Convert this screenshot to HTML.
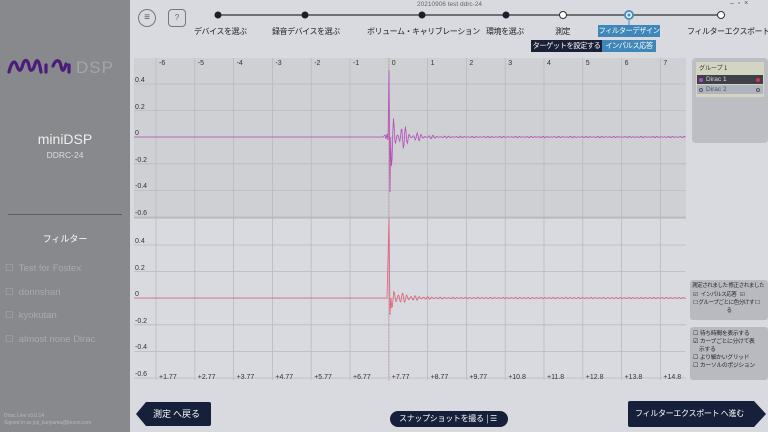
<!DOCTYPE html>
<html><head><meta charset="utf-8"><style>
*{margin:0;padding:0;box-sizing:border-box}
body{width:768px;height:432px;overflow:hidden;background:#d9dadf;font-family:"Liberation Sans","Noto Sans CJK JP",sans-serif;position:relative}
.a{position:absolute;white-space:nowrap}
#side{left:0;top:0;width:130px;height:432px;background:#88898c;color:#e8e8ea}
.lab{font-size:7px;color:#333;position:absolute}
.jp{font-family:"Noto Sans CJK JP",sans-serif}
</style></head><body>
<div id="side" class="a">
<svg class="a" style="left:6px;top:52px" width="120" height="26">
<path d="M3 20 C6 8 9 8 11 14 C13 20 15 20 17 12 C19 6 22 8 23 14 C24 20 27 20 29 12 C31 6 33 8 35 20" stroke="#4b1c7a" stroke-width="3.2" fill="none" stroke-linecap="round"/>
<path d="M40 13 L40 20 M47 14 C50 6 54 8 55 14 C56 20 58 20 60 12 M63 13 L63 20" stroke="#4b1c7a" stroke-width="3.2" fill="none" stroke-linecap="round"/>
<text x="70" y="21" font-size="17" fill="#a5a5a8" font-family="Liberation Sans" letter-spacing="1">DSP</text>
</svg>
<div class="a" style="left:0;width:130px;top:131px;text-align:center;font-size:14px;color:#eee">miniDSP</div>
<div class="a" style="left:0;width:130px;top:150px;text-align:center;font-size:8.5px;color:#ddd">DDRC-24</div>
<div class="a" style="left:8px;top:214px;width:114px;height:1px;background:#5f6064"></div>
<div class="a jp" style="left:0;width:130px;top:232px;text-align:center;font-size:9px;color:#fff">フィルター</div>
<div class="a" style="left:5px;top:257px;font-size:9.5px;color:#a9aaad;line-height:23.5px">
<div>☐ &nbsp;Test for Fostex</div><div>☐ &nbsp;donnshari</div><div>☐ &nbsp;kyokutan</div><div>☐ &nbsp;almost none Dirac</div></div>
<div class="a" style="left:4px;top:413px;font-size:5px;color:#b8b8bb;line-height:7px">Dirac Live v3.0.14<br>Signed in as joji_kuriyama@jtesori.com</div>
</div>
<div class="a" style="left:417px;top:1px;font-size:6.5px;color:#666">20210906 test ddrc-24</div>
<div class="a" style="left:730px;top:0;font-size:7px;color:#555">–&nbsp;&nbsp;▫&nbsp;&nbsp;×</div>
<div class="a" style="left:138px;top:9px;width:18px;height:18px;border:1px solid #777;border-radius:50%;font-size:10px;text-align:center;line-height:15px;color:#555">≡</div>
<div class="a" style="left:168px;top:9px;width:18px;height:18px;border:1px solid #777;border-radius:4px;font-size:8px;text-align:center;line-height:16px;color:#666">?</div>
<svg class="a" style="left:0;top:0" width="768" height="30">
<line x1="218" y1="15" x2="721" y2="15" stroke="#333" stroke-width="1.2"/>
<circle cx="218" cy="15" r="3.5" fill="#1c1f2a"/><circle cx="305" cy="15" r="3.5" fill="#1c1f2a"/><circle cx="422" cy="15" r="3.5" fill="#1c1f2a"/><circle cx="506" cy="15" r="3.5" fill="#1c1f2a"/>
<circle cx="563" cy="15" r="3.5" fill="#fff" stroke="#333"/>
<circle cx="629" cy="15" r="5" fill="#4a8fbf"/><circle cx="629" cy="15" r="3" fill="#fff"/><circle cx="629" cy="15" r="1.6" fill="#4a8fbf"/>
<line x1="629" y1="20" x2="629" y2="26" stroke="#4a8fbf"/>
<circle cx="721" cy="15" r="3.5" fill="#fff" stroke="#333"/>
</svg>
<div class="a jp" style="top:26px;font-size:8px;letter-spacing:-0.45px;color:#222;left:0;width:768px;height:30px">
<span class="a" style="left:194px">デバイスを選ぶ</span>
<span class="a" style="left:272px">録音デバイスを選ぶ</span>
<span class="a" style="left:367px">ボリューム・キャリブレーション</span>
<span class="a" style="left:486px">環境を選ぶ</span>
<span class="a" style="left:555px">測定</span>
<span class="a" style="left:598px;top:-1px;width:62px;text-align:center;background:#3f87b8;color:#fff;font-size:7.3px;letter-spacing:-0.5px;line-height:12px">フィルターデザイン</span>
<span class="a" style="left:687px">フィルターエクスポート</span>
<span class="a" style="left:531px;top:14px;width:71px;text-align:center;background:#1a2035;color:#fff;font-size:7.3px;letter-spacing:-0.5px;line-height:12px">ターゲットを設定する</span>
<span class="a" style="left:602px;top:14px;width:54px;text-align:center;background:#3f87b8;color:#fff;font-size:7.3px;letter-spacing:-0.5px;line-height:12px">インパルス応答</span>
</div>
<div class="a" style="left:134px;top:58px;width:552px;height:160px;background:#cfd0d4"></div>
<svg class="a" style="left:0;top:0" width="768" height="432" id="ch">
<g stroke="#b9babe" stroke-width="0.8" id="grid"></g>
<line x1="389" y1="58" x2="389" y2="382" stroke="#c77" stroke-width="0.6" stroke-dasharray="1.5 1.5"/>
<path id="w1" fill="none" stroke="#b64db8" stroke-width="0.8"/>
<path id="w2" fill="none" stroke="#e0607a" stroke-width="0.8"/>
</svg>
<div id="labs"></div>
<div class="a" style="left:692px;top:58px;width:76px;height:85px;background:#bdbec4;border-radius:4px"></div>
<div class="a" style="left:696px;top:62px;width:68px;height:35px;background:#d4d4c2"></div>
<div class="a jp" style="left:699px;top:63px;font-size:6px;color:#333">グループ 1</div>
<div class="a" style="left:697px;top:75px;width:66px;height:9px;background:#3f4048;color:#ddd;font-size:6.5px;line-height:9px;padding-left:9px">Dirac 1</div>
<div class="a" style="left:699px;top:77.5px;width:4px;height:4px;border-radius:50%;background:#b04ec0"></div>
<div class="a" style="left:756px;top:77.5px;width:4px;height:4px;border-radius:50%;background:#e03050"></div>
<div class="a" style="left:697px;top:85px;width:66px;height:9px;background:#aeb5c1;color:#555;font-size:6.5px;line-height:9px;padding-left:9px">Dirac 2</div>
<div class="a" style="left:699px;top:87.5px;width:4px;height:4px;border-radius:50%;border:1px solid #555"></div>
<div class="a" style="left:756px;top:87.5px;width:4px;height:4px;border-radius:50%;border:1px solid #555"></div>
<div class="a jp" style="left:690px;top:280px;width:78px;height:40px;background:#b9bac0;border-radius:3px;font-size:5.5px;letter-spacing:-0.4px;color:#222;line-height:8px;overflow:hidden">
<div style="padding:1px 2px">測定されました 修正されました</div>
<div style="padding-left:3px">☑ &nbsp;&nbsp; インパルス応答 &nbsp;&nbsp;&nbsp;☑</div>
<div style="padding-left:3px">☐ グループごとに色分けす ☐</div><div style="text-align:center">る</div></div>
<div class="a jp" style="left:690px;top:327px;width:78px;height:53px;background:#b9bac0;border-radius:3px;font-size:5.8px;letter-spacing:-0.3px;color:#222;line-height:8px;padding:2px 3px">
<div>☐ &nbsp;待ち時間を表示する</div><div>☑ &nbsp;カーブごとに分けて表</div><div>&nbsp;&nbsp;&nbsp;&nbsp;&nbsp;&nbsp;示する</div><div>☐ &nbsp;より細かいグリッド</div><div>☐ &nbsp;カーソルのポジション</div></div>
<svg class="a" style="left:132px;top:401px" width="80" height="26"><path d="M4 13 L14 1 L77 1 Q79 1 79 3 L79 23 Q79 25 77 25 L14 25 Z" fill="#16203a"/></svg>
<div class="a jp" style="left:153px;top:407px;font-size:9px;color:#fff">測定 へ戻る</div>
<div class="a jp" style="left:390px;top:411px;width:118px;height:16px;background:#16203a;border-radius:8px;color:#fff;font-size:8px;letter-spacing:-0.3px;line-height:16px;padding-left:9px">スナップショットを撮る &nbsp;| ☰</div>
<svg class="a" style="left:626px;top:400px" width="142" height="28"><path d="M2 3 Q2 1 4 1 L128 1 L140 14 L128 27 L4 27 Q2 27 2 25 Z" fill="#16203a"/></svg>
<div class="a jp" style="left:635px;top:408px;font-size:8px;letter-spacing:-0.3px;color:#fff">フィルターエクスポート へ進む</div>
<script>
var g=document.getElementById('grid'),h='',L='';
for(var i=0;i<14;i++){var x=156+i*38.8;h+='<line x1="'+x+'" y1="58" x2="'+x+'" y2="380"/>';
var t=i-6;L+='<div class="lab" style="left:'+(x+3)+'px;top:60px">'+t+'</div>';
var b=['+1.77','+2.77','+3.77','+4.77','+5.77','+6.77','+7.77','+8.77','+9.77','+10.8','+11.8','+12.8','+13.8','+14.8'][i];
L+='<div class="lab" style="left:'+(x+3)+'px;top:374px">'+b+'</div>';}
var yl=['0.4','0.2','0','-0.2','-0.4','-0.6'];
for(var k=0;k<6;k++){var y1=84+k*26.6,y2=245+k*26.6;
h+='<line x1="134" y1="'+y1+'" x2="686" y2="'+y1+'"/><line x1="134" y1="'+y2+'" x2="686" y2="'+y2+'"/>';
L+='<div class="lab" style="left:135px;top:'+(y1-7)+'px">'+yl[k]+'</div><div class="lab" style="left:135px;top:'+(y2-7)+'px">'+yl[k]+'</div>';}
h+='<line x1="134" y1="218" x2="686" y2="218" stroke="#aaa"/>';
g.innerHTML=h;document.getElementById('labs').innerHTML=L;
var d='M134 137 L383 137 L385 135 L386 139 L387 134 L388 140 L389 70 L390 192';
for(var x=390.7;x<686;x+=0.7){var t=x-390.7;var a=34*Math.exp(-t/12)+0.8;var y=137+a*Math.sin(t*1.6)*(0.55+0.45*Math.cos(t*0.45));d+=' L'+x.toFixed(1)+' '+y.toFixed(1);}
document.getElementById('w1').setAttribute('d',d);
var b2='M134 298 L387 298 L389 218 L390 315';
for(var x=391;x<686;x+=0.7){var t=x-391;var a=11*Math.exp(-t/14)+0.7;b2+=' L'+x.toFixed(1)+' '+(298+a*Math.sin(t*1.5)*(0.7+0.3*Math.cos(t*0.5))).toFixed(1);}
document.getElementById('w2').setAttribute('d',b2);
</script>
</body></html>
